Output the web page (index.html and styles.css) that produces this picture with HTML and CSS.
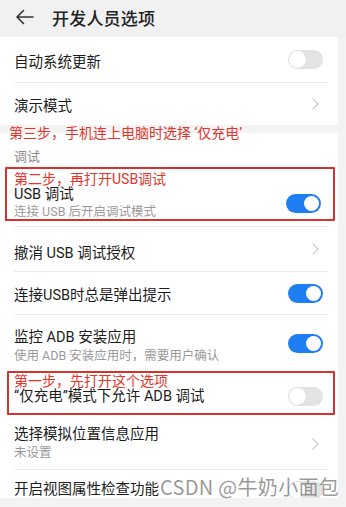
FILE: index.html
```html
<!DOCTYPE html>
<html lang="zh-CN">
<head>
<meta charset="UTF-8">
<meta name="viewport" content="width=device-width, initial-scale=1.0">
<title>开发人员选项</title>
<link rel="stylesheet" href="styles.css">
</head>
<body>
<div class="screen">
  <div class="header">
    <svg class="back" width="20" height="16" viewBox="0 0 20 16">
      <path d="M18 8H2M8.5 1.5L2 8l6.5 6.5" fill="none" stroke="#333" stroke-width="1.6" stroke-linecap="round" stroke-linejoin="round"/>
    </svg>
    <span class="title">开发人员选项</span>
  </div>

  <div class="body">
    <div class="card">
      <div class="item h46 rule">
        <span class="name">自动系统更新</span>
        <span class="switch"></span>
      </div>
      <div class="item h42">
        <span class="name">演示模式</span>
        <span class="chevron"></span>
      </div>
      <div class="band"></div>
      <div class="note note-top">第三步，手机连上电脑时选择 ‘仅充电’</div>

      <div class="section-label">调试</div>

      <div class="boxed box-usb">
        <div class="note">第二步，再打开USB调试</div>
        <div class="boxed-row">
          <div class="text">
            <div class="name">USB 调试</div>
            <div class="sub">连接 USB 后开启调试模式</div>
          </div>
          <span class="switch on"></span>
        </div>
      </div>
      <div class="line first"></div>

      <div class="item h45 rule low">
        <span class="name">撤消 USB 调试授权</span>
        <span class="chevron"></span>
      </div>
      <div class="item h43 rule">
        <span class="name">连接USB时总是弹出提示</span>
        <span class="switch on"></span>
      </div>
      <div class="item h53 top">
        <div class="text">
          <div class="name">监控 ADB 安装应用</div>
          <div class="sub">使用 ADB 安装应用时，需要用户确认</div>
        </div>
        <span class="switch on"></span>
      </div>

      <div class="boxed box-adb">
        <div class="note tight">第一步，先打开这个选项</div>
        <div class="boxed-row center">
          <span class="name">“仅充电”模式下允许 ADB 调试</span>
          <span class="switch"></span>
        </div>
      </div>

      <div class="item h55 rule top2">
        <div class="text">
          <div class="name">选择模拟位置信息应用</div>
          <div class="sub">未设置</div>
        </div>
        <span class="chevron"></span>
      </div>
      <div class="item h44 last">
        <span class="name">开启视图属性检查功能</span>
        <span class="switch"></span>
      </div>
    </div>
  </div>

  <div class="watermark">CSDN @牛奶小面包</div>
</div>
</body>
</html>
```

FILE: styles.css
```css
* {
  box-sizing: border-box;
}

body {
  margin: 0;
  background: #f3f3f3;
  font-family: "Noto Sans CJK SC", "Noto Sans", sans-serif;
  color: #1c1c1c;
}

.screen {
  position: relative;
  width: 346px;
  height: 507px;
  overflow: hidden;
}

.header {
  height: 37px;
  background: #f1f1f1;
  display: flex;
  align-items: center;
  padding: 0 0 3px 15px;
}

.header .back {
  margin-right: 17px;
}

.header .title {
  font-size: 17px;
  font-weight: 500;
  color: #222;
  letter-spacing: 0.2px;
}

.body {
  height: 461px;
  overflow: hidden;
  padding-right: 8px;
}

.card {
  position: relative;
  background: #fff;
  min-height: 100%;
}

.item {
  margin: 0 10px 0 14px;
  padding-right: 5px;
  display: flex;
  align-items: center;
  justify-content: space-between;
}

/* single-line labels sit a little under the middle */
.item > .name {
  margin-top: 6px;
}

.item.rule {
  border-bottom: 1px solid #ececec;
}

.item.low > .name {
  margin-top: 9px;
}

.item.top {
  align-items: flex-start;
  padding-top: 15px;
}

.item.top2 {
  padding-top: 3px;
}

.item.last {
  align-items: flex-start;
  padding-top: 12px;
}

.item.last > .name {
  margin-top: 0;
}

.h42 { height: 42px; }
.h43 { height: 43px; }
.h44 { height: 44px; }
.h45 { height: 45px; }
.h46 { height: 46px; }
.h53 { height: 54px; }
.h55 { height: 55px; }

.name {
  font-family: Roboto, "Noto Sans CJK SC", sans-serif;
  font-size: 14.5px;
  line-height: 16px;
  color: #1c1c1c;
}

.sub {
  font-family: Roboto, "Noto Sans CJK SC", sans-serif;
  font-size: 12.5px;
  line-height: 16px;
  color: #9a9a9a;
  margin-top: 2px;
}

.item.top .switch {
  margin-top: 4px;
}

.item.last .switch {
  margin-top: -1px;
}

.switch {
  position: relative;
  width: 35px;
  height: 19px;
  border-radius: 10px;
  background: #e3e3e3;
  flex-shrink: 0;
}

.switch::after {
  content: "";
  position: absolute;
  left: 1px;
  top: 1px;
  width: 17px;
  height: 17px;
  border-radius: 50%;
  background: #fff;
  box-shadow: 0 0 0 0.5px #d6d6d6;
}

.switch.on {
  background: #1f7ef2;
}

.switch.on::after {
  left: auto;
  right: 2px;
  top: 2px;
  width: 15px;
  height: 15px;
  box-shadow: none;
}

.chevron {
  width: 8px;
  height: 8px;
  border-top: 1.2px solid #c4c4c4;
  border-right: 1.2px solid #c4c4c4;
  transform: rotate(45deg);
  margin-right: 6px;
}

.band {
  height: 8px;
  background: #f3f3f3;
  margin-right: -8px;
}

.note {
  font-family: Roboto, "Noto Sans CJK SC", sans-serif;
  font-size: 14px;
  line-height: 16px;
  color: #e2352c;
}

.note-top {
  position: absolute;
  left: 9px;
  top: 88px;
}

.section-label {
  height: 34px;
  padding: 15px 0 0 14px;
  font-size: 13px;
  line-height: 16px;
  color: #8c8c8c;
}

.boxed {
  border: 2px solid #d8322c;
  border-radius: 1px;
}

.box-usb {
  height: 54px;
  margin: 0 3px 0 5px;
  padding: 2px 0 0 7px;
}

.boxed-row {
  display: flex;
  justify-content: space-between;
  align-items: flex-end;
  padding-right: 12px;
}

.box-usb .sub {
  margin-top: 1px;
}

.box-usb .switch {
  margin-bottom: 7px;
}

.boxed-row.center {
  align-items: center;
}

.box-adb {
  height: 44px;
  margin: 2px 3px 0 7px;
  padding: 0 0 0 5px;
}

.note.tight {
  line-height: 12px;
  padding-top: 2px;
}

.box-adb .boxed-row {
  margin-top: 0;
  padding-right: 10px;
}

.line {
  height: 1px;
  background: #ececec;
  margin: 0 10px 0 14px;
}

.line.first {
  margin-top: 5px;
}

.watermark {
  position: absolute;
  left: 160px;
  top: 474px;
  font-size: 20px;
  line-height: 26px;
  color: rgba(120, 120, 120, 0.75);
  letter-spacing: 0.3px;
}
```
